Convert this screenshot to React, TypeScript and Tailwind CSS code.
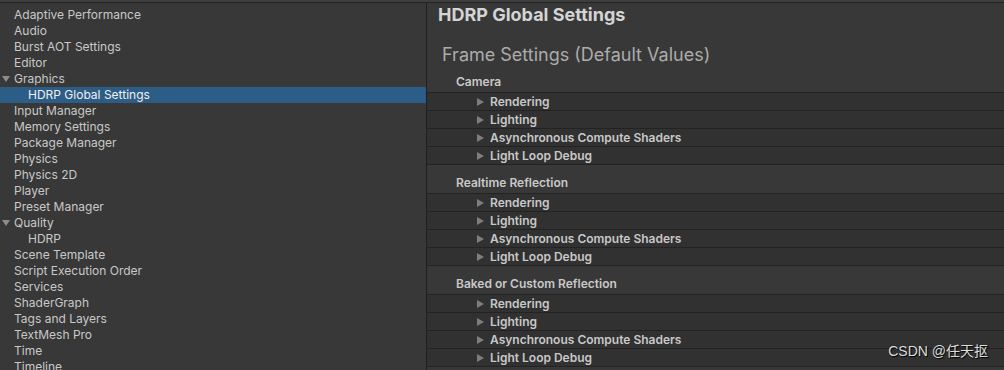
const font = { fontFamily: 'Inter, "Noto Sans", sans-serif' };

type Item = { label: string; level: number; open?: boolean; selected?: boolean };

const items: Item[] = [
  { label: 'Adaptive Performance', level: 1 },
  { label: 'Audio', level: 1 },
  { label: 'Burst AOT Settings', level: 1 },
  { label: 'Editor', level: 1 },
  { label: 'Graphics', level: 1, open: true },
  { label: 'HDRP Global Settings', level: 2, selected: true },
  { label: 'Input Manager', level: 1 },
  { label: 'Memory Settings', level: 1 },
  { label: 'Package Manager', level: 1 },
  { label: 'Physics', level: 1 },
  { label: 'Physics 2D', level: 1 },
  { label: 'Player', level: 1 },
  { label: 'Preset Manager', level: 1 },
  { label: 'Quality', level: 1, open: true },
  { label: 'HDRP', level: 2 },
  { label: 'Scene Template', level: 1 },
  { label: 'Script Execution Order', level: 1 },
  { label: 'Services', level: 1 },
  { label: 'ShaderGraph', level: 1 },
  { label: 'Tags and Layers', level: 1 },
  { label: 'TextMesh Pro', level: 1 },
  { label: 'Time', level: 1 },
  { label: 'Timeline', level: 1 },
];

const sections = ['Camera', 'Realtime Reflection', 'Baked or Custom Reflection'];
const foldouts = ['Rendering', 'Lighting', 'Asynchronous Compute Shaders', 'Light Loop Debug'];

function DownArrow() {
  return (
    <svg width="8" height="6" viewBox="0 0 8 6" className="absolute left-[2px] top-[5px]">
      <polygon points="0,0 8,0 4,6" fill="#8c8c8c" />
    </svg>
  );
}

function RightArrow() {
  return (
    <svg width="7" height="8" viewBox="0 0 7 8" className="shrink-0">
      <polygon points="0,0 7,4 0,8" fill="#7e7e7e" />
    </svg>
  );
}

function SettingsTree() {
  return (
    <div className="w-[426px] shrink-0 bg-[#383838] pt-[4px]">
      {items.map((it) => (
        <div
          key={it.label}
          className={
            'relative h-[16px] text-[12px] leading-[16px] whitespace-nowrap ' +
            (it.selected ? 'bg-[#2c5d87] text-[#f0f0f0]' : 'text-[#c8c8c8]')
          }
        >
          {it.open && <DownArrow />}
          <span className={it.level === 2 ? 'pl-[28px]' : 'pl-[14px]'}>{it.label}</span>
        </div>
      ))}
    </div>
  );
}

function Section({ title, first }: { title: string; first?: boolean }) {
  return (
    <div>
      <div
        className={
          'h-[20px] pl-[29px] text-[12px] font-semibold leading-[20px] text-[#c8c8c8] ' +
          (first ? 'mt-[5px]' : 'mt-[8px]')
        }
      >
        {title}
      </div>
      <div className="border-b border-[#232323]">
        {foldouts.map((f) => (
          <div
            key={f}
            className="flex h-[18px] items-center gap-[6px] border-t border-[#232323] bg-[#313131] pl-[50px] text-[12px] font-semibold text-[#c8c8c8]"
          >
            <RightArrow />
            <span className="leading-[17px]">{f}</span>
          </div>
        ))}
      </div>
    </div>
  );
}

export default function App() {
  return (
    <div className="relative h-[370px] w-[1004px] overflow-hidden bg-[#383838]" style={font}>
      <div className="h-[2px] bg-[#3e3e3e]" />
      <div className="h-px bg-[#232323]" />
      <div className="flex h-[367px]">
        <SettingsTree />
        <div className="w-px shrink-0 bg-[#1f1f1f]" />
        <div className="flex-1 bg-[#383838]">
          <div className="h-[24px] pl-[11px] text-[18px] font-bold leading-[24px] text-[#d4d4d4]">
            HDRP Global Settings
          </div>
          <div className="mt-[16px] h-[24px] pl-[15px] text-[18px] leading-[24px] text-[#acacac]">
            Frame Settings (Default Values)
          </div>
          {sections.map((s, i) => (
            <Section key={s} title={s} first={i === 0} />
          ))}
        </div>
      </div>
      <div
        className="absolute right-[16px] bottom-[8px] text-[14px] text-[#dcdcdc] [text-shadow:1px_1px_1px_#000]"
        style={{ fontFamily: '"Liberation Sans", "Noto Sans CJK SC", sans-serif' }}
      >
        CSDN @任天抠
      </div>
    </div>
  );
}
